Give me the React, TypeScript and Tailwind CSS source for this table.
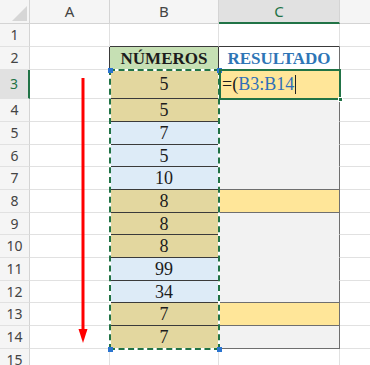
import React from "react";

type Row = {
  n: number;
  b?: string;
  bBg?: string;
  cBg?: string;
};

const TAN = "bg-[#e3d79f]";
const BLUE = "bg-[#ddebf7]";
const GRAY = "bg-[#f2f2f2]";
const YELLOW = "bg-[#ffe699]";

const rows: Row[] = [
  { n: 1 },
  { n: 2 },
  { n: 3, b: "5", bBg: TAN, cBg: YELLOW },
  { n: 4, b: "5", bBg: TAN, cBg: GRAY },
  { n: 5, b: "7", bBg: BLUE, cBg: GRAY },
  { n: 6, b: "5", bBg: BLUE, cBg: GRAY },
  { n: 7, b: "10", bBg: BLUE, cBg: GRAY },
  { n: 8, b: "8", bBg: TAN, cBg: YELLOW },
  { n: 9, b: "8", bBg: TAN, cBg: GRAY },
  { n: 10, b: "8", bBg: TAN, cBg: GRAY },
  { n: 11, b: "99", bBg: BLUE, cBg: GRAY },
  { n: 12, b: "34", bBg: BLUE, cBg: GRAY },
  { n: 13, b: "7", bBg: TAN, cBg: YELLOW },
  { n: 14, b: "7", bBg: TAN, cBg: GRAY },
  { n: 15 },
];

const serif = "font-['Liberation_Serif',serif]";
const ui = "font-['Noto_Sans',sans-serif]";

function cBorderBottom(i: number) {
  const r = rows[i];
  const next = rows[i + 1];
  if (r.n === 1 || r.n === 2) return "border-b border-b-[#3a3a3a]";
  if (r.n >= 3 && r.n <= 14) {
    const here = r.cBg === YELLOW;
    const below = next && next.cBg === YELLOW;
    if (here || below || r.n === 14) return "border-b border-b-[#6f6f6f]";
    return "border-b border-b-[#f2f2f2]";
  }
  return "border-b border-b-[#e1e1e1]";
}

function RowView({ r, i }: { r: Row; i: number }) {
  const inTable = r.n >= 2 && r.n <= 14;
  const selected = r.n === 3;
  return (
    <>
      <div
        className={`flex items-center justify-center overflow-hidden text-[14px] leading-none ${ui} ${
          selected
            ? "bg-[#e1e1e1] text-[#217346] border-r-2 border-r-[#217346]"
            : "bg-[#f5f5f5] text-[#444] border-r border-r-[#d4d4d4]"
        } border-b border-b-[#e1e1e1]`}
      >
        {r.n}
      </div>
      <div
        className={`bg-white border-b border-b-[#e1e1e1] border-r ${
          inTable ? "border-r-[#3a3a3a]" : "border-r-[#e1e1e1]"
        }`}
      />
      <div
        className={`flex items-center justify-center overflow-hidden leading-none text-[#1c1c1c] ${serif} ${
          r.n === 2 ? "bg-[#c6e0b4] text-[17px] font-bold" : `${r.bBg ?? "bg-white"} text-[18px]`
        } border-b border-r ${
          r.n === 1 || inTable ? "border-b-[#3a3a3a]" : "border-b-[#e1e1e1]"
        } ${inTable ? "border-r-[#3a3a3a]" : "border-r-[#e1e1e1]"}`}
      >
        {r.n === 2 ? "NÚMEROS" : r.b}
      </div>
      <div
        className={`flex items-center overflow-hidden leading-none ${serif} ${
          r.n === 2 ? "bg-white justify-center text-[17px]" : `${r.cBg ?? "bg-white"} text-[18px]`
        } ${cBorderBottom(i)} border-r ${
          inTable ? "border-r-[#6f6f6f]" : "border-r-[#e1e1e1]"
        }`}
      >
        {r.n === 2 && (
          <span className="font-bold text-[#2e75b6]">RESULTADO</span>
        )}
        {r.n === 3 && (
          <span className="flex items-center pl-[3px]">
            <span className="text-[#1c1c1c]">=(</span>
            <span className="text-[#2f6fb8]">B3:B14</span>
            <span className="ml-[1px] h-[19px] w-px bg-[#222]" />
          </span>
        )}
      </div>
      <div className="bg-white border-b border-b-[#e1e1e1]" />
    </>
  );
}

export default function App() {
  return (
    <div className="relative h-[365px] w-[370px] overflow-hidden bg-white">
      <div className="grid grid-cols-[30px_80px_109px_121px_30px] grid-rows-[24px_23px_23px_29px_23px_23px_22px_23px_23px_22px_23px_23px_22px_23px_23px_23px]">
        {/* column headers */}
        <div className="relative bg-[#f5f5f5] border-r border-r-[#d4d4d4] border-b border-b-[#d4d4d4]">
          <svg className="absolute inset-0" width="30" height="24">
            <polygon points="27,6 27,21 12,21" fill="#d6d6d6" />
          </svg>
        </div>
        {["A", "B"].map((l) => (
          <div
            key={l}
            className={`flex items-center justify-center bg-[#f5f5f5] text-[15px] leading-none text-[#444] ${ui} border-r border-r-[#d4d4d4] border-b border-b-[#d4d4d4]`}
          >
            {l}
          </div>
        ))}
        <div
          className={`flex items-center justify-center bg-[#e1e1e1] text-[15px] leading-none text-[#217346] ${ui} border-r border-r-[#d4d4d4] border-b-2 border-b-[#217346]`}
        >
          C
        </div>
        <div className="bg-[#f5f5f5] border-b border-b-[#d4d4d4]" />

        {rows.map((r, i) => (
          <RowView key={r.n} r={r} i={i} />
        ))}
      </div>

      {/* red arrow */}
      <svg
        className="absolute left-[75px] top-[76px]"
        width="16"
        height="270"
      >
        <line x1="8" y1="2" x2="8" y2="256" stroke="#ff0000" strokeWidth="3" />
        <polygon points="3.5,253 12.5,253 8,267" fill="#ff0000" />
      </svg>

      {/* copied range marching ants */}
      <div className="absolute left-[109px] top-[69px] h-[281px] w-[111px] border-2 border-white" />
      <div className="absolute left-[109px] top-[69px] h-[281px] w-[111px] border-2 border-dashed border-[#217346]" />
      <div className="absolute left-[108px] top-[68px] h-[5px] w-[5px] bg-[#2a74d0]" />
      <div className="absolute left-[217px] top-[68px] h-[5px] w-[5px] bg-[#2a74d0]" />
      <div className="absolute left-[108px] top-[347px] h-[5px] w-[5px] bg-[#2a74d0]" />
      <div className="absolute left-[217px] top-[347px] h-[5px] w-[5px] bg-[#2a74d0]" />

      {/* active cell */}
      <div className="absolute left-[219px] top-[69px] h-[31px] w-[122px] border-2 border-[#217346]" />
      <div className="absolute left-[338px] top-[97px] h-[5px] w-[5px] bg-[#217346] border border-white" />
    </div>
  );
}
